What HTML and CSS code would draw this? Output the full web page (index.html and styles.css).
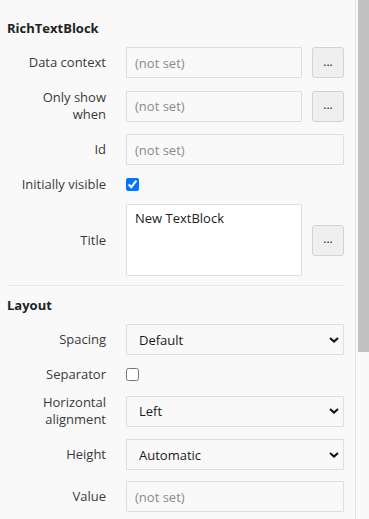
FILE: index.html
```html
<!DOCTYPE html>
<html lang="en">
<head>
<meta charset="utf-8">
<title>Properties</title>
<link rel="stylesheet" href="styles.css">
</head>
<body>
<div class="app">
  <div class="panel">
    <section class="group">
      <h2 class="group-title">RichTextBlock</h2>
      <div class="props">
        <label class="prop-label">Data context</label>
        <div class="prop-field with-btn">
          <input class="text-input" type="text" placeholder="(not set)">
          <button class="more-btn" type="button">...</button>
        </div>

        <label class="prop-label">Only show<br>when</label>
        <div class="prop-field with-btn">
          <input class="text-input" type="text" placeholder="(not set)">
          <button class="more-btn" type="button">...</button>
        </div>

        <label class="prop-label">Id</label>
        <div class="prop-field">
          <input class="text-input" type="text" placeholder="(not set)">
        </div>

        <label class="prop-label">Initially visible</label>
        <div class="prop-field">
          <input class="check" type="checkbox" checked>
        </div>

        <label class="prop-label">Title</label>
        <div class="prop-field with-btn">
          <textarea class="text-area">New TextBlock</textarea>
          <button class="more-btn" type="button">...</button>
        </div>
      </div>
    </section>

    <hr class="divider">

    <section class="group">
      <h2 class="group-title">Layout</h2>
      <div class="props">
        <label class="prop-label">Spacing</label>
        <div class="prop-field">
          <div class="select"><span>Default</span><svg class="chev" width="10" height="6" viewBox="0 0 10 6"><polyline points="1,1 5,4.6 9,1" fill="none" stroke="#111" stroke-width="2"/></svg></div>
        </div>

        <label class="prop-label">Separator</label>
        <div class="prop-field">
          <input class="check" type="checkbox">
        </div>

        <label class="prop-label">Horizontal<br>alignment</label>
        <div class="prop-field">
          <div class="select"><span>Left</span><svg class="chev" width="10" height="6" viewBox="0 0 10 6"><polyline points="1,1 5,4.6 9,1" fill="none" stroke="#111" stroke-width="2"/></svg></div>
        </div>

        <label class="prop-label">Height</label>
        <div class="prop-field">
          <div class="select"><span>Automatic</span><svg class="chev" width="10" height="6" viewBox="0 0 10 6"><polyline points="1,1 5,4.6 9,1" fill="none" stroke="#111" stroke-width="2"/></svg></div>
        </div>

        <label class="prop-label">Value</label>
        <div class="prop-field">
          <input class="text-input" type="text" placeholder="(not set)">
        </div>
      </div>
    </section>
  </div>
  <div class="scrollbar"><div class="thumb"></div></div>
</div>
</body>
</html>
```

FILE: styles.css
```css
html, body {
  margin: 0;
  padding: 0;
}

body {
  background: #f9f9f9;
  font-family: "Open Sans", "Noto Sans", sans-serif;
  font-size: 13px;
  color: #333;
  height: 519px;
  overflow: hidden;
}

.app {
  display: flex;
  height: 519px;
}

.panel {
  width: 355px;
  flex: none;
  box-sizing: border-box;
  padding: 19px 11px 0 7px;
  border-right: 1px solid #e2e2e2;
  width: 356px;
}

.scrollbar {
  flex: 1;
  padding-left: 2px;
}

.thumb {
  height: 352px;
  background: #c1c1c1;
}

.group-title {
  margin: 0 0 10px;
  font-size: 13px;
  line-height: 18px;
  font-weight: 700;
  color: #222;
}

.props {
  display: grid;
  grid-template-columns: 99px 1fr;
  column-gap: 20px;
  row-gap: 11px;
  align-items: center;
}

.prop-label {
  text-align: right;
  line-height: 17px;
  color: #3a3a3a;
}

.prop-field {
  display: flex;
  align-items: center;
  min-width: 0;
}

.with-btn {
  gap: 10px;
}

.text-input {
  flex: 1;
  min-width: 0;
  height: 31px;
  box-sizing: border-box;
  margin: 0;
  padding: 0 8px;
  border: 1px solid #dedede;
  border-radius: 1px;
  background: #f9f9f9;
  font: inherit;
  color: #222;
  outline: none;
}

.text-input::placeholder {
  color: #8a8a8a;
}

.text-area {
  flex: 1;
  min-width: 0;
  height: 72px;
  box-sizing: border-box;
  margin: 0;
  padding: 4px 8px;
  border: 1px solid #dedede;
  border-radius: 1px;
  background: #fff;
  font: inherit;
  line-height: 18px;
  color: #222;
  resize: none;
  outline: none;
}

.more-btn {
  flex: none;
  width: 32px;
  height: 31px;
  box-sizing: border-box;
  margin: 0;
  padding: 0 0 2px;
  border: 1px solid #d2d2d2;
  border-radius: 3px;
  background: #efefef;
  font: inherit;
  font-size: 12px;
  color: #222;
  line-height: 1;
}

.check {
  width: 13px;
  height: 13px;
  margin: 0;
  accent-color: #0075ff;
}

.select {
  flex: 1;
  display: flex;
  align-items: center;
  justify-content: space-between;
  height: 31px;
  box-sizing: border-box;
  padding: 0 4px 0 12px;
  border: 1px solid #dedede;
  border-radius: 1px;
  background: #f9f9f9;
  color: #1a1a1a;
}

.chev {
  display: block;
}

.divider {
  margin: 9px 0 10px;
  border: 0;
  border-top: 1px solid #e6e6e6;
  height: 0;
}
```
